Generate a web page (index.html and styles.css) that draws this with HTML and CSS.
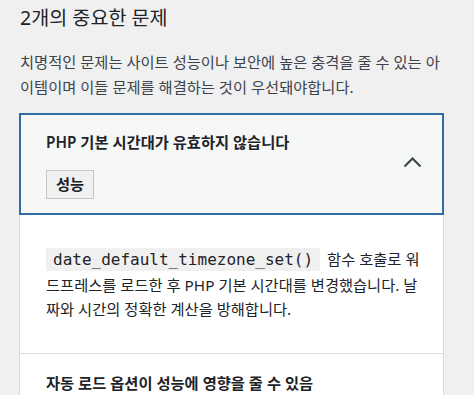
FILE: index.html
```html
<!DOCTYPE html>
<html lang="ko">
<head>
<meta charset="utf-8">
<link rel="stylesheet" href="styles.css">
</head>
<body>
<div class="page">
  <h2 class="title">2개의 중요한 문제</h2>
  <p class="desc">치명적인 문제는 사이트 성능이나 보안에 높은 충격을 줄 수 있는 아이템이며 이들 문제를 해결하는 것이 우선돼야합니다.</p>
  <div class="list">
    <div class="item open">
      <div class="item-head">
        <div class="head-main">
          <div class="item-title">PHP 기본 시간대가 유효하지 않습니다</div>
          <span class="badge">성능</span>
        </div>
        <svg class="chevron" width="19" height="12" viewBox="0 0 19 12"><path d="M1.5 10.5 L9.5 2.5 L17.5 10.5" fill="none" stroke="#3c434a" stroke-width="2"/></svg>
      </div>
      <div class="item-body">
        <p><code>date_default_timezone_set()</code> 함수 호출로 워드프레스를 로드한 후 PHP 기본 시간대를 변경했습니다. 날짜와 시간의 정확한 계산을 방해합니다.</p>
      </div>
    </div>
    <div class="item">
      <div class="item-head">
        <div class="item-title">자동 로드 옵션이 성능에 영향을 줄 수 있음</div>
      </div>
    </div>
  </div>
</div>
</body>
</html>
```
FILE: styles.css
```css
html, body {
  margin: 0;
  padding: 0;
  background: #f0f0f1;
}
body {
  font-family: "Noto Sans", "Noto Sans CJK KR", sans-serif;
  color: #1d2327;
  height: 395px;
  overflow: hidden;
}
.page {
  padding: 3px 30px 0 19px;
}
.title {
  margin: 0 0 0 1px;
  font-size: 19.6px;
  font-weight: 400;
  line-height: 30px;
}
.desc {
  margin: 17px 0 0 1px;
  font-size: 15.3px;
  line-height: 25px;
  color: #3c434a;
}
.list {
  margin-top: 13px;
  background: #fff;
  border-left: 1px solid #dcdcde;
  border-right: 1px solid #dcdcde;
}
.item-head {
  display: flex;
  align-items: center;
  justify-content: space-between;
  padding: 17px 20px 14px 26px;
}
.open .item-head {
  background: #f6f7f7;
  border: 2px solid #2e6ea5;
  margin: 0 -1px;
  padding-left: 25px;
}
.item-title {
  font-size: 15.3px;
  font-weight: 600;
  line-height: 21px;
}
.badge {
  display: inline-block;
  margin-top: 17px;
  padding: 0 9px;
  font-size: 15.3px;
  font-weight: 700;
  line-height: 27px;
  background: #f0f0f1;
  border: 1px solid #c3c4c7;
}
.chevron {
  margin-top: -8px;
}
.item-body {
  padding: 32px 14px 31px 26px;
}
.item-body p {
  margin: 0;
  font-size: 15.3px;
  line-height: 24.5px;
  color: #1d2327;
}
code {
  font-family: "DejaVu Sans Mono", monospace;
  font-size: 16px;
  background: #f0f0f1;
  padding: 2px 7px 2px;
  margin-right: 3px;
}
.item + .item {
  border-top: 1px solid #dcdcde;
}
.item:not(.open) .item-head {
  padding-top: 19px;
}
```
